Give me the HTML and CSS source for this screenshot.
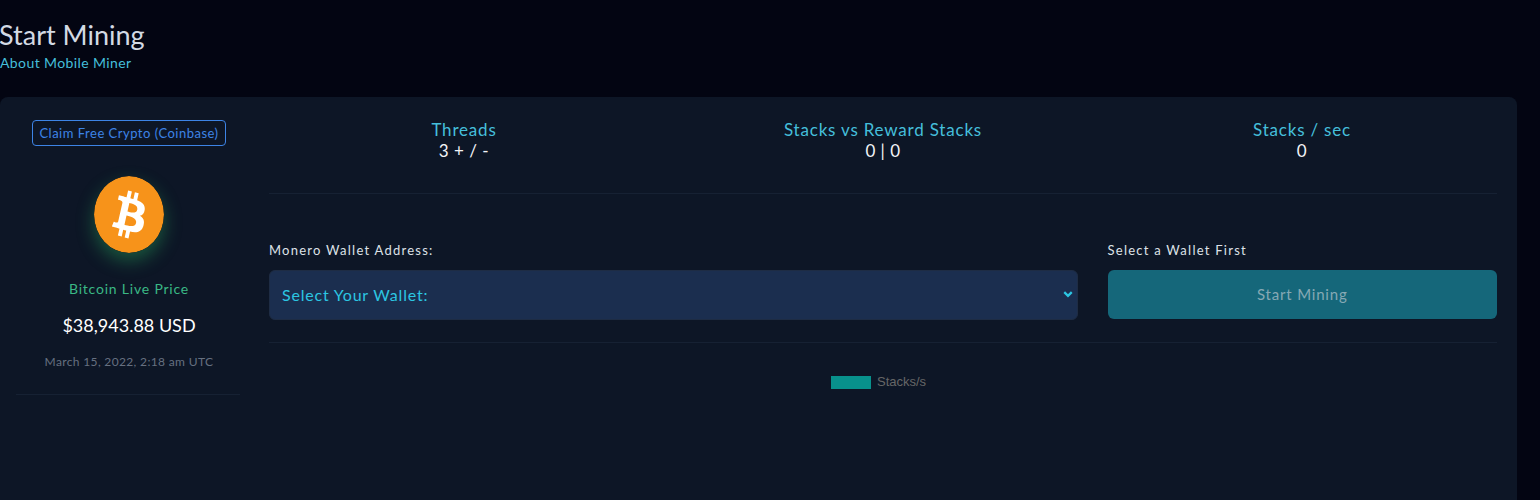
FILE: index.html
```html
<!DOCTYPE html>
<html>
    <head>
        <meta charset="UTF-8" />
        <title>Start Mining</title>
        <link rel="stylesheet" href="styles.css">
    </head>
    <body>
        <div class="pageHead">
            <h1 class="pageTitle">Start Mining</h1>
            <a class="aboutLink" href="#">About Mobile Miner</a>
        </div>
        <div class="card">
            <div class="side">
                <a class="claimBtn" href="#">Claim Free Crypto (Coinbase)</a>
                <svg class="coin" viewBox="0 0 32 32" preserveAspectRatio="none">
                    <circle cx="16" cy="16" r="16" fill="#f7931a" />
                    <path fill="#fff" fill-rule="evenodd" d="M23.189 14.02c.314-2.096-1.283-3.223-3.465-3.975l.708-2.84-1.728-.43-.69 2.765c-.454-.114-.92-.22-1.385-.326l.695-2.783L15.596 6l-.708 2.839c-.376-.086-.746-.17-1.104-.26l.002-.009-2.384-.595-.46 1.846s1.283.294 1.256.312c.7.175.826.638.805 1.006l-.806 3.235c.048.012.11.03.18.057l-.183-.045-1.13 4.532c-.086.212-.303.531-.793.41.018.025-1.256-.313-1.256-.313l-.858 1.978 2.25.561c.418.105.828.215 1.231.318l-.715 2.872 1.727.43.708-2.84c.472.127.93.245 1.378.357l-.706 2.828 1.728.43.715-2.866c2.948.558 5.164.333 6.097-2.333.752-2.146-.037-3.385-1.588-4.192 1.13-.26 1.98-1.003 2.207-2.538zm-3.95 5.538c-.533 2.147-4.148.986-5.32.695l.95-3.805c1.172.293 4.929.872 4.37 3.11zm.535-5.569c-.487 1.953-3.495.96-4.47.717l.86-3.45c.975.243 4.118.696 3.61 2.733z" />
                </svg>
                <div class="liveLabel">Bitcoin Live Price</div>
                <div class="livePrice">$38,943.88 USD</div>
                <div class="liveDate">March 15, 2022, 2:18 am UTC</div>
                <hr class="rule sideRule" />
            </div>
            <div class="main">
                <div class="stats">
                    <div class="stat">
                        <div class="statName">Threads</div>
                        <div class="statValue">3 + / -</div>
                    </div>
                    <div class="stat">
                        <div class="statName">Stacks vs Reward Stacks</div>
                        <div class="statValue">0 | 0</div>
                    </div>
                    <div class="stat">
                        <div class="statName">Stacks / sec</div>
                        <div class="statValue">0</div>
                    </div>
                </div>
                <hr class="rule" />
                <div class="walletRow">
                    <div>
                        <div class="fieldLabel">Monero Wallet Address:</div>
                        <div class="walletSelect">
                            <span>Select Your Wallet:</span>
                            <svg class="chevron" viewBox="0 0 16 16">
                                <path d="M3 5.5l5 5 5-5" fill="none" stroke="#2cc6e2" stroke-width="3" />
                            </svg>
                        </div>
                    </div>
                    <div>
                        <div class="fieldLabel">Select a Wallet First</div>
                        <button class="startBtn" type="button" disabled>Start Mining</button>
                    </div>
                </div>
                <hr class="rule" />
                <div class="legend">
                    <span class="legendBox"></span>
                    <span class="legendText">Stacks/s</span>
                </div>
            </div>
        </div>
    </body>
</html>
```

FILE: styles.css
```css
* {
    box-sizing: border-box;
}
html,
body {
    height: 100%;
}
body {
    margin: 0;
    overflow: hidden;
    background-color: #030512;
    font-family: "Lato", "Open Sans", sans-serif;
    color: #fff;
}
.pageHead {
    height: 97px;
    padding-top: 18px;
}
.pageTitle {
    margin: 0 0 0 -1px;
    font-size: 27px;
    line-height: 34px;
    font-weight: 400;
    color: #d3dae4;
}
.aboutLink {
    display: block;
    margin-top: 2px;
    font-size: 14px;
    line-height: 18px;
    letter-spacing: 0.4px;
    color: #45bfdb;
    text-decoration: none;
}
.card {
    display: flex;
    width: 1517px;
    height: 420px;
    background-color: #0d1626;
    border-radius: 8px;
}
.side {
    display: flex;
    flex-direction: column;
    align-items: center;
    width: 258px;
    padding: 23px 16px 0;
}
.claimBtn {
    padding: 4px 6.5px;
    border: 1px solid #3d84e6;
    border-radius: 4px;
    font-size: 13px;
    line-height: 16px;
    letter-spacing: 0.5px;
    white-space: nowrap;
    color: #3d84e6;
    text-decoration: none;
}
.coin {
    flex: none;
    width: 70px;
    height: 77px;
    margin-top: 30px;
    border-radius: 50%;
    box-shadow: 0 8px 18px rgba(40, 167, 90, 0.45);
}
.liveLabel {
    margin-top: 27px;
    font-size: 14px;
    line-height: 18px;
    letter-spacing: 0.8px;
    color: #3ab885;
}
.livePrice {
    margin-top: 16px;
    font-size: 18px;
    line-height: 22px;
}
.liveDate {
    margin-top: 18px;
    font-size: 12px;
    line-height: 16px;
    letter-spacing: 0.35px;
    color: #667080;
}
.rule {
    width: 100%;
    margin: 0;
    border: 0;
    border-top: 1px solid #162133;
}
.sideRule {
    align-self: flex-start;
    width: 224px;
    margin-top: 24px;
}
.main {
    width: 1228px;
    margin-left: 11px;
}
.stats {
    display: grid;
    grid-template-columns: repeat(3, 1fr);
    column-gap: 29px;
    height: 96px;
    padding-top: 23px;
    text-align: center;
}
.statName {
    font-size: 17px;
    line-height: 20px;
    letter-spacing: 0.8px;
    color: #45bfdb;
}
.statValue {
    font-size: 17px;
    line-height: 21px;
    letter-spacing: 0.5px;
    color: #f2f4f7;
}
.walletRow {
    display: grid;
    grid-template-columns: 809px 1fr;
    column-gap: 29.5px;
    height: 148px;
    padding-top: 48px;
}
.fieldLabel {
    height: 28px;
    font-size: 13px;
    line-height: 17px;
    letter-spacing: 1.25px;
    color: #dde2e8;
}
.walletSelect {
    display: flex;
    align-items: center;
    justify-content: space-between;
    height: 50px;
    padding: 0 3px 2px 12px;
    background-color: #1b2e4f;
    border: 1px solid #1e2c44;
    border-radius: 6px;
    font-size: 16px;
    letter-spacing: 0.8px;
    color: #2cc6e2;
}
.chevron {
    width: 12px;
    height: 12px;
}
.startBtn {
    display: block;
    width: 100%;
    height: 49px;
    padding-bottom: 3px;
    background-color: #15677a;
    border: 0;
    border-radius: 6px;
    font-family: inherit;
    font-size: 15px;
    letter-spacing: 0.8px;
    color: #86a9b4;
}
.legend {
    display: flex;
    align-items: center;
    height: 13px;
    margin-top: 33px;
    padding-left: 562px;
}
.legendBox {
    width: 40px;
    height: 13px;
    background-color: #08918c;
}
.legendText {
    margin-left: 6px;
    padding-bottom: 2px;
    font-family: "Liberation Sans", sans-serif;
    font-size: 13px;
    color: #666;
}
```
